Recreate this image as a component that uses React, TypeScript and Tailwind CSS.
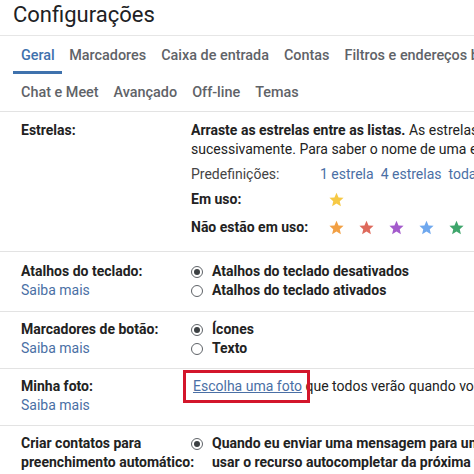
import React from 'react'

const tabsTop = ['Geral', 'Marcadores', 'Caixa de entrada', 'Contas', 'Filtros e endereços bloqueados']
const tabsBottom = ['Chat e Meet', 'Avançado', 'Off-line', 'Temas']
const offStars = ['#f2a044', '#de6a5c', '#a45bcc', '#6fa8ee', '#3fa66c']

function Star({ color }: { color: string }) {
  return (
    <svg width="17" height="17" viewBox="0 0 24 24" className="shrink-0">
      <path
        d="M12 2.5l2.9 6.6 7.1.6-5.4 4.7 1.6 7-6.2-3.7-6.2 3.7 1.6-7L2 9.7l7.1-.6z"
        fill={color}
      />
    </svg>
  )
}

function Dot({ checked }: { checked?: boolean }) {
  return (
    <span className="w-[12px] h-[12px] rounded-full border border-[#5f6368] flex items-center justify-center shrink-0">
      {checked && <span className="w-[6px] h-[6px] rounded-full bg-[#3c4043]" />}
    </span>
  )
}

function Radio({ checked, label }: { checked?: boolean; label: string }) {
  return (
    <div className="flex items-center gap-[9px] h-[19px]">
      <Dot checked={checked} />
      <span className="font-bold text-[#222]">{label}</span>
    </div>
  )
}

function Row({ label, more, children, className }: { label: React.ReactNode; more?: boolean; children: React.ReactNode; className?: string }) {
  return (
    <div className={'flex border-b border-[#e3e3e3] ' + (className ?? 'pt-[8px] pb-[10px]')}>
      <div className="w-[191px] shrink-0 pl-[21px]">
        <div className="font-bold text-[#222]">{label}</div>
        {more && <div className="text-[#4a6fa5]">Saiba mais</div>}
      </div>
      <div className="flex-1 whitespace-nowrap">{children}</div>
    </div>
  )
}

export default function App() {
  return (
    <div className="w-[474px] h-[474px] overflow-hidden bg-white text-[14px] leading-[19px] text-[#222] font-['Roboto',sans-serif]">
      <div className="h-[36px] border-b border-[#e6e6e6] pl-[13px] pt-[1px]">
        <h1 className="text-[22px] leading-[28px] text-[#202124]">Configurações</h1>
      </div>

      <div className="pl-[13px] whitespace-nowrap text-[14.4px]">
        <div className="flex h-[38px]">
          {tabsTop.map((t, i) => (
            <div
              key={t}
              className={
                i === 0
                  ? 'pl-[8px] pr-[7px] flex items-center border-b-[3px] border-[#3f72ad] text-[#3f72ad] font-medium pt-[3px]'
                  : 'px-[7.5px] flex items-center text-[#5f6368] font-medium'
              }
            >
              {t}
            </div>
          ))}
        </div>
        <div className="flex h-[38px] border-b border-[#e3e3e3] -ml-[13px] pl-[13px]">
          {tabsBottom.map((t, i) => (
            <div key={t} className={(i === 0 ? 'pl-[8px] pr-[7.5px]' : 'px-[7.5px]') + ' flex items-center text-[#5f6368] font-medium'}>
              {t}
            </div>
          ))}
        </div>
      </div>

      <Row label="Estrelas:" className="pt-[9px] pb-[14px]">
        <div>
          <span className="font-bold">Arraste as estrelas entre as listas.</span> As estrelas giram na ordem abaixo quando você clica
        </div>
        <div>sucessivamente. Para saber o nome de uma estrela, passe o mouse sobre a imagem.</div>
        <div className="flex mt-[6px] h-[19px]">
          <span className="w-[129px] text-[#444]">Predefinições:</span>
          <span className="text-[#4a6fa5] flex gap-[7px]">
            <span>1 estrela</span>
            <span>4 estrelas</span>
            <span>todas as estrelas</span>
          </span>
        </div>
        <div className="flex items-center mt-[6px] h-[19px]">
          <span className="w-[137px] font-bold">Em uso:</span>
          <Star color="#f6c945" />
        </div>
        <div className="flex items-center mt-[9px] h-[19px]">
          <span className="w-[137px] font-bold">Não estão em uso:</span>
          <div className="flex gap-[13px]">
            {offStars.map(c => (
              <Star key={c} color={c} />
            ))}
          </div>
        </div>
      </Row>

      <Row label="Atalhos do teclado:" more className="pt-[10px] pb-[11px]">
        <Radio checked label="Atalhos do teclado desativados" />
        <Radio label="Atalhos do teclado ativados" />
      </Row>

      <Row label="Marcadores de botão:" more>
        <Radio checked label="Ícones" />
        <Radio label="Texto" />
      </Row>

      <Row label="Minha foto:" more>
        <div className="pl-[2px]">
          <span className="relative">
            <span className="text-[#4a6fa5] underline">Escolha uma foto</span>
            <span className="absolute -left-[10px] -right-[8px] -top-[8px] -bottom-[9px] border-[3px] border-[#d3162b]" />
          </span>
          <span> que todos verão quando você enviar um e-mail.</span>
        </div>
      </Row>

      <div className="flex pt-[8px] whitespace-nowrap">
        <div className="w-[191px] shrink-0 pl-[21px] font-bold">
          <div>Criar contatos para</div>
          <div>preenchimento automático:</div>
        </div>
        <div className="flex-1 flex gap-[9px]">
          <span className="mt-[4px]">
            <Dot checked />
          </span>
          <div className="font-bold">
            <div>Quando eu enviar uma mensagem para uma pessoa nova, adicioná-la</div>
            <div>usar o recurso autocompletar da próxima vez</div>
          </div>
        </div>
      </div>
    </div>
  )
}
